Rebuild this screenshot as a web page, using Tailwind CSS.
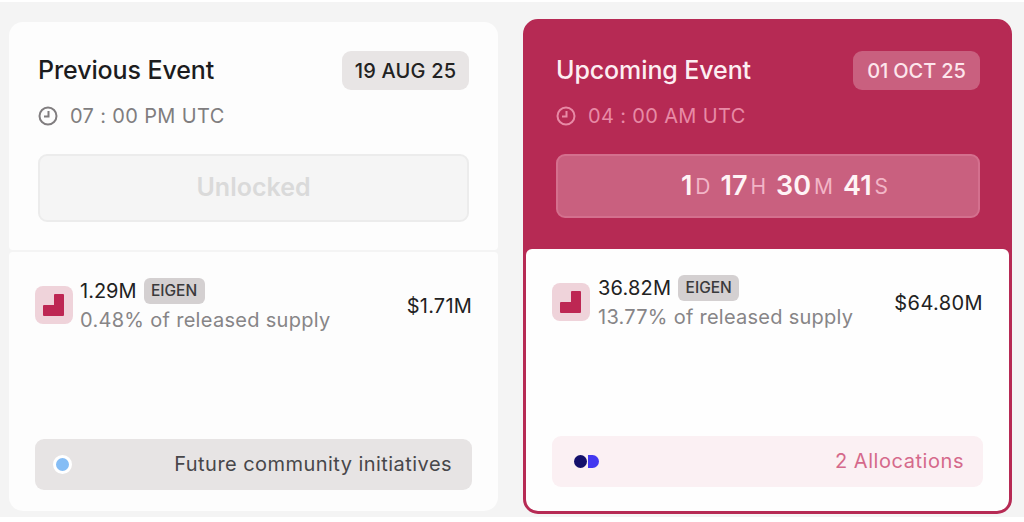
<!DOCTYPE html>
<html lang="en">
<head>
  <meta charset="UTF-8">
  <title>Unlock Events</title>
  <script src="https://cdn.jsdelivr.net/npm/@tailwindcss/browser@4"></script>
</head>
<body class="bg-white font-['Inter',sans-serif]">
  <div class="mt-[2px] flex h-[515px] gap-[25px] overflow-hidden bg-[#f4f4f4] pl-[9px]">

    <!-- Previous event -->
    <div class="mt-[20px] flex h-[489px] w-[489px] flex-col gap-[2px]">
      <div class="h-[228px] rounded-t-[14px] rounded-b-[4px] bg-[#fdfdfd] px-[29px] pt-[29px]">
        <div class="flex h-[39px] items-center justify-between">
          <h2 class="pt-[1px] text-[25px] font-medium tracking-[-0.1px] text-[#1c1c1e]">Previous Event</h2>
          <span class="flex h-[39px] w-[127px] items-center justify-center rounded-[9px] bg-[#e8e5e5] text-[20px] font-medium tracking-[0.2px] text-[#222]">19 AUG 25</span>
        </div>
        <div class="mt-[15px] flex h-[22px] items-center gap-[12px] text-[20px] tracking-[0.35px] text-[#807d7f]">
          <svg class="size-[20px]" viewBox="0 0 20 20" fill="none" stroke="currentColor" stroke-width="2"><circle cx="10" cy="10" r="8.5"/><path d="M10.5 5v5.5H6"/></svg>
          <span>07 : 00 PM UTC</span>
        </div>
        <div class="mt-[27px] flex h-[68px] items-center justify-center rounded-[9px] border-2 border-[#ececec] bg-[#f5f5f5] text-[25px] font-semibold text-[#dadada]">Unlocked</div>
      </div>
      <div class="flex h-[259px] flex-col justify-between rounded-t-[4px] rounded-b-[14px] bg-[#fdfdfd] px-[26px] pt-[26px] pb-[21px]">
        <div class="flex items-start justify-between">
          <div class="flex gap-[7px]">
            <div class="mt-[8px] flex size-[38px] items-center justify-center rounded-[8px] bg-[#efd3da]">
              <svg class="size-[22px]" viewBox="0 0 22 22"><path fill="#bd2753" d="M11 1a1 1 0 0 1 1-1h8a1 1 0 0 1 1 1v20a1 1 0 0 1-1 1H1a1 1 0 0 1-1-1v-9a1 1 0 0 1 1-1h10z"/></svg>
            </div>
            <div>
              <div class="flex h-[26px] items-center gap-[7px]">
                <span class="text-[20px] text-[#222]">1.29M</span>
                <span class="flex h-[26px] w-[61px] items-center justify-center rounded-[6px] bg-[#d4d0d1] text-[15.5px] font-medium text-[#3a3a3c]">EIGEN</span>
              </div>
              <p class="mt-[3px] text-[20px] leading-[26px] tracking-[0.3px] text-[#878587]">0.48% of released supply</p>
            </div>
          </div>
          <span class="mt-[13px] text-[20px] tracking-[0.2px] text-[#222]">$1.71M</span>
        </div>
        <div class="flex h-[51px] items-center justify-between rounded-[9px] bg-[#e7e4e4] pr-[20px] pl-[18px]">
          <span class="size-[19px] rounded-full border-[3px] border-white bg-[#85bdf5]"></span>
          <span class="mb-[2px] text-[20px] tracking-[0.45px] text-[#48474a]">Future community initiatives</span>
        </div>
      </div>
    </div>

    <!-- Upcoming event -->
    <div class="mt-[17px] flex h-[495px] w-[489px] flex-col rounded-[15px] border-[3px] border-[#b62a54] bg-[#b62a54]">
      <div class="h-[227px] pt-[29px] pr-[29px] pl-[30px]">
        <div class="flex h-[39px] items-center justify-between">
          <h2 class="pt-[1px] text-[25px] font-medium tracking-[-0.1px] text-[#fdeef2]">Upcoming Event</h2>
          <span class="flex h-[39px] w-[127px] items-center justify-center rounded-[9px] bg-[#c9607f] text-[20px] font-medium tracking-[-0.1px] text-[#fde6ec]">01 OCT 25</span>
        </div>
        <div class="mt-[15px] flex h-[22px] items-center gap-[12px] text-[20px] tracking-[0.35px] text-[#e88aa6]">
          <svg class="size-[20px]" viewBox="0 0 20 20" fill="none" stroke="currentColor" stroke-width="2"><circle cx="10" cy="10" r="8.5"/><path d="M10.5 5v5.5H6"/></svg>
          <span>04 : 00 AM UTC</span>
        </div>
        <div class="mt-[27px] flex h-[64px] items-center justify-center rounded-[9px] border-2 border-[#d4708e] bg-[#c9607f] pt-[1px] pl-[33px] text-[27px] font-semibold text-[#fff4f6]">
          <span>1</span><span class="ml-[3px] text-[21px] font-normal text-[#f2b5c7]">D</span>
          <span class="ml-[10px]">17</span><span class="ml-[3px] text-[21px] font-normal text-[#f2b5c7]">H</span>
          <span class="ml-[10px]">30</span><span class="ml-[3px] text-[21px] font-normal text-[#f2b5c7]">M</span>
          <span class="ml-[10px]">41</span><span class="ml-[3px] text-[21px] font-normal text-[#f2b5c7]">S</span>
        </div>
      </div>
      <div class="flex flex-1 flex-col justify-between rounded-t-[6px] rounded-b-[12px] bg-[#fefefe] px-[26px] pt-[26px] pb-[24px]">
        <div class="flex items-start justify-between">
          <div class="flex gap-[8px]">
            <div class="mt-[8px] flex size-[38px] items-center justify-center rounded-[8px] bg-[#efd3da]">
              <svg class="size-[22px]" viewBox="0 0 22 22"><path fill="#bd2753" d="M11 1a1 1 0 0 1 1-1h8a1 1 0 0 1 1 1v20a1 1 0 0 1-1 1H1a1 1 0 0 1-1-1v-9a1 1 0 0 1 1-1h10z"/></svg>
            </div>
            <div>
              <div class="flex h-[26px] items-center gap-[7px]">
                <span class="text-[20px] tracking-[0.2px] text-[#222]">36.82M</span>
                <span class="flex h-[26px] w-[61px] items-center justify-center rounded-[6px] bg-[#d4d0d1] text-[15.5px] font-medium text-[#3a3a3c]">EIGEN</span>
              </div>
              <p class="mt-[3px] text-[20px] leading-[26px] tracking-[0.26px] text-[#878587]">13.77% of released supply</p>
            </div>
          </div>
          <span class="mt-[13px] text-[20px] tracking-[0.4px] text-[#222]">$64.80M</span>
        </div>
        <div class="flex h-[51px] items-center justify-between rounded-[9px] bg-[#fbf0f3] pr-[19px] pl-[22px]">
          <span class="flex items-center gap-[1px]">
            <span class="size-[13px] rounded-full bg-[#14106b]"></span>
            <span class="h-[13px] w-[11px] rounded-r-full bg-[#4338f0]"></span>
          </span>
          <span class="mb-[2px] text-[20px] tracking-[0.55px] text-[#d5698b]">2 Allocations</span>
        </div>
      </div>
    </div>

  </div>
</body>
</html>
